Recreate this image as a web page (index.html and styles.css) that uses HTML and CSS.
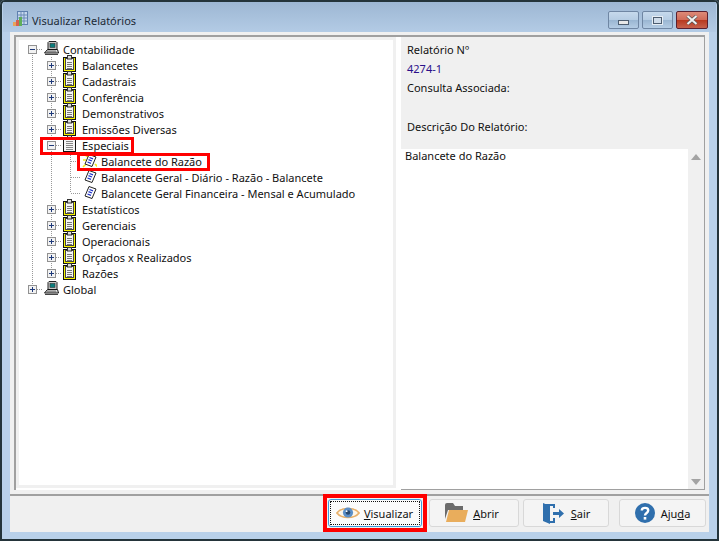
FILE: index.html
```html
<!DOCTYPE html>
<html lang="pt">
<head>
<meta charset="utf-8">
<title>Visualizar Relatórios</title>
<link rel="stylesheet" href="styles.css">
</head>
<body>
<svg class="defs" width="0" height="0">
  <defs>
    <symbol id="pc" viewBox="0 0 15 18">
      <g transform="translate(0,1)">
        <path d="M5 1.500h7l1 1v7H4V2.500z" fill="#c8c8c8" stroke="#222"/>
        <rect x="6" y="3.500" width="5" height="4" fill="#0a7d7d" stroke="#333" stroke-width=".6"/>
        <path d="M3.500 9.500h10l1 3.500H.5z" fill="#e4e4e4" stroke="#111"/>
        <path d="M3 11h9M2.500 12h10" stroke="#555" stroke-width=".7"/>
        <path d="M1 14.500h13" stroke="#444"/>
      </g>
    </symbol>
    <symbol id="clip" viewBox="0 0 15 18">
      <rect x=".5" y="2.500" width="12" height="14" fill="#f8f400" stroke="#111"/>
      <rect x="2.500" y="3.500" width="8" height="11" fill="#f6f6f6" stroke="#444"/>
      <path d="M4 7.500h5M4 9.500h5M4 11.500h5M4 13.500h5" stroke="#777"/>
      <rect x="4.500" y=".5" width="4" height="3.500" fill="#ddd" stroke="#333"/>
    </symbol>
    <symbol id="clipoff" viewBox="0 0 15 18">
      <rect x=".5" y="2.500" width="12" height="14" fill="#f6f6f6" stroke="#111"/>
      <path d="M3 6.500h7M3 8.500h7M3 10.500h7M3 12.500h7M3 14.500h7" stroke="#888"/>
      <rect x="4.500" y=".5" width="4" height="3.500" fill="#ddd" stroke="#333"/>
    </symbol>
    <symbol id="rep" viewBox="0 0 15 18">
      <g transform="translate(1,2)">
        <path d="M6 1.500l7 2.500L9 13.500 2 11z" fill="#fff" stroke="#222"/>
        <path d="M6.500 4.500l3.500 1.300M5.500 6.700l3.500 1.300M4.500 9l3.500 1.300" stroke="#1c30c8" stroke-width="1.300"/>
      </g>
    </symbol>
    <symbol id="repsel" viewBox="0 0 15 18">
      <path d="M2 3l4 3M15 2l-3 3M1 16l3-3M16 16l-3-3M9 2v2M1 9h3" stroke="#f2e820" stroke-width="1.600"/>
      <use href="#rep" width="15" height="18"/>
    </symbol>
  </defs>
</svg>
<div class="window">
  <header class="titlebar">
    <svg class="appicon" width="16" height="16" viewBox="0 0 16 16">
      <rect x="4.500" y=".5" width="10" height="13" fill="#c6d8ee" stroke="#5e7fae"/>
      <path d="M4.500 4h10M4.500 7h10M4.500 10h10M8 .5v13M11 .5v13" stroke="#6a8ab6"/>
      <rect x="0" y="11" width="3" height="4" fill="#e8a35a"/>
      <rect x="3" y="9" width="3" height="6" fill="#d66050"/>
      <rect x="6" y="6" width="3" height="9" fill="#5fae5a"/>
    </svg>
    <span class="title">Visualizar Relatórios</span>
    <div class="caption">
      <span class="capbtn"><i class="glyph-min"></i></span>
      <span class="capbtn"><i class="glyph-max"></i></span>
      <span class="capbtn close">
        <svg width="12" height="10" viewBox="0 0 12 10"><path d="M1.500 1l9 8M10.500 1l-9 8" stroke="#555" stroke-width="3.400"/><path d="M1.500 1l9 8M10.500 1l-9 8" stroke="#f2f2f2" stroke-width="2"/></svg>
      </span>
    </div>
  </header>
  <div class="content">
    <div class="main">
      <div class="tree-wrap">
        <div class="tree">
          <div class="row"><i class="cell exp first"><b class="box minus"></b></i><svg class="ico"><use href="#pc"/></svg><span class="lbl">Contabilidade</span></div>
          <div class="row"><i class="cell vline"></i><i class="cell exp"><b class="box plus"></b></i><svg class="ico"><use href="#clip"/></svg><span class="lbl">Balancetes</span></div>
          <div class="row"><i class="cell vline"></i><i class="cell exp"><b class="box plus"></b></i><svg class="ico"><use href="#clip"/></svg><span class="lbl">Cadastrais</span></div>
          <div class="row"><i class="cell vline"></i><i class="cell exp"><b class="box plus"></b></i><svg class="ico"><use href="#clip"/></svg><span class="lbl">Conferência</span></div>
          <div class="row"><i class="cell vline"></i><i class="cell exp"><b class="box plus"></b></i><svg class="ico"><use href="#clip"/></svg><span class="lbl">Demonstrativos</span></div>
          <div class="row"><i class="cell vline"></i><i class="cell exp"><b class="box plus"></b></i><svg class="ico"><use href="#clip"/></svg><span class="lbl">Emissões Diversas</span></div>
          <div class="row"><i class="cell vline"></i><i class="cell exp"><b class="box minus"></b></i><svg class="ico"><use href="#clipoff"/></svg><span class="lbl">Especiais</span></div>
          <div class="row"><i class="cell vline"></i><i class="cell vline"></i><i class="cell branch"></i><svg class="ico"><use href="#repsel"/></svg><span class="lbl">Balancete do Razão</span></div>
          <div class="row"><i class="cell vline"></i><i class="cell vline"></i><i class="cell branch"></i><svg class="ico"><use href="#rep"/></svg><span class="lbl">Balancete Geral - Diário - Razão - Balancete</span></div>
          <div class="row"><i class="cell vline"></i><i class="cell vline"></i><i class="cell branch last"></i><svg class="ico"><use href="#rep"/></svg><span class="lbl">Balancete Geral Financeira - Mensal e Acumulado</span></div>
          <div class="row"><i class="cell vline"></i><i class="cell exp"><b class="box plus"></b></i><svg class="ico"><use href="#clip"/></svg><span class="lbl">Estatísticos</span></div>
          <div class="row"><i class="cell vline"></i><i class="cell exp"><b class="box plus"></b></i><svg class="ico"><use href="#clip"/></svg><span class="lbl">Gerenciais</span></div>
          <div class="row"><i class="cell vline"></i><i class="cell exp"><b class="box plus"></b></i><svg class="ico"><use href="#clip"/></svg><span class="lbl">Operacionais</span></div>
          <div class="row"><i class="cell vline"></i><i class="cell exp"><b class="box plus"></b></i><svg class="ico"><use href="#clip"/></svg><span class="lbl">Orçados x Realizados</span></div>
          <div class="row"><i class="cell vline"></i><i class="cell exp end"><b class="box plus"></b></i><svg class="ico"><use href="#clip"/></svg><span class="lbl">Razões</span></div>
          <div class="row"><i class="cell exp end"><b class="box plus"></b></i><svg class="ico"><use href="#pc"/></svg><span class="lbl">Global</span></div>
        </div>
      </div>
      <aside class="side">
        <div class="info">
          <div class="info-line">Relatório Nº</div>
          <div class="info-line num">4274-1</div>
          <div class="info-line">Consulta Associada:</div>
          <div class="info-line blank"></div>
          <div class="info-line">Descrição Do Relatório:</div>
        </div>
        <div class="desc">
          <div class="desc-text">Balancete do Razão</div>
          <div class="scroll"><i class="arrow up"></i><i class="arrow down"></i></div>
        </div>
      </aside>
    </div>
    <footer class="footer">
      <button class="btn focus">
        <svg width="24" height="16" viewBox="0 0 26 16"><path d="M1 8C6 1.500 20 1.500 25 8 20 14.500 6 14.500 1 8z" fill="#fdf6ea" stroke="#e8b06a" stroke-width="1.800"/><circle cx="13" cy="7.500" r="5.500" fill="#5b8fc8"/><circle cx="13" cy="7.500" r="2.500" fill="#28486e"/><circle cx="11.500" cy="6" r="1" fill="#fff"/></svg>
        <span><u>V</u>isualizar</span>
      </button>
      <button class="btn abrir">
        <svg width="23" height="20" viewBox="0 0 23 20"><path d="M0 2q0-2 2-2h6l2 3h8v4H3l-3 9z" fill="#6b6b6b"/><path d="M4 7h19l-3 12H1z" fill="#e9ad5c"/></svg>
        <span><u>A</u>brir</span>
      </button>
      <button class="btn sair">
        <svg width="22" height="21" viewBox="0 0 22 21"><path d="M0 1h12v4h-2V3H5v15h5v-3h2v5H6z" fill="#2f6fad"/><path d="M0 0l7 3v18l-7-3z" fill="#2f6fad"/><path d="M10 9h6V6l5 4.500-5 4.500v-3h-6z" fill="#2f6fad"/></svg>
        <span><u>S</u>air</span>
      </button>
      <button class="btn ajuda">
        <svg width="20" height="20" viewBox="0 0 20 20"><circle cx="10" cy="10" r="10" fill="#2f6fad"/><path d="M6.800 7.500C7 4 13.200 4 13.200 7.500c0 2.500-3.200 2.400-3.200 5" fill="none" stroke="#fff" stroke-width="2.400"/><rect x="8.700" y="14" width="2.600" height="2.600" fill="#fff"/></svg>
        <span>Aju<u>d</u>a</span>
      </button>
    </footer>
  </div>
  <i class="mark mark-a"></i>
  <i class="mark mark-b"></i>
  <i class="mark mark-c"></i>
</div>
</body>
</html>
```
FILE: styles.css
```css
* { box-sizing: border-box; }
html, body { margin: 0; padding: 0; background: #2b3a40; }
.defs { position: absolute; }
.window {
  position: relative;
  width: 719px; height: 541px;
  padding: 2px 3px 3px;
  background: #b9d1ea;
  box-shadow: inset 0 0 0 2px #24343a;
  border-radius: 5px 5px 0 0;
  font-family: "Noto Sans", sans-serif;
  font-size: 11px;
  color: #111;
  display: flex; flex-direction: column;
}
.titlebar {
  height: 30px; flex: none;
  display: flex; align-items: center;
  padding: 0 8px 0 10px;
  background: linear-gradient(#9db7d3, #b3cbe5);
}
.appicon { flex: none; margin: 3px 3px 0 0; }
.title { font-size: 11px; margin: 7px 0 0 0; color: #1c2a36; }
.caption { margin-left: auto; display: flex; gap: 3px; align-self: flex-start; margin-top: 9px; }
.capbtn {
  width: 31px; height: 18px;
  display: flex; align-items: center; justify-content: center;
  border: 1px solid #6f86a3; border-radius: 2px;
  background: linear-gradient(#c6d9ec 0, #b5cce3 50%, #9ab6d2 52%, #b4cce4 100%);
}
.capbtn.close { width: 32px; border-color: #5a2030; background: linear-gradient(#dd8a78 0, #cf6a58 50%, #b8391f 52%, #c6614c 100%); }
.glyph-min { width: 11px; height: 5px; background: #e8e8e8; border: 1px solid #4d5d70; margin-top: 5px; }
.glyph-max { width: 11px; height: 9px; border: 2px solid #4d5d70; background: #cfdcea; outline: 1px solid #e6edf4; outline-offset: -1px; }
.content {
  flex: 1; min-height: 0;
  margin: 0 7px 6px;
  background: #f0f0f0;
  display: flex; flex-direction: column;
  padding: 3px 0 0 4px;
}
.main {
  height: 455px; flex: none;
  margin-right: 4px;
  display: flex;
  border-top: 2px solid #a0a0a0;
  border-left: 2px solid #a0a0a0;
  border-right: 1px solid #a0a0a0;
  background: #fff;
}
.tree-wrap {
  width: 380px; flex: none;
  background: #fff;
  border: 3px solid #f0f0f0;
  height: 451px;
}
.tree { padding: 1px 0 0 4px; }
.row { height: 16px; display: flex; align-items: center; white-space: nowrap; }
.cell { display: block; flex: none; width: 19px; height: 16px; position: relative; }
.vline { background: repeating-linear-gradient(#999 0 1px, transparent 1px 2px) 9px 0 / 1px 100% no-repeat; }
.exp {
  background:
    repeating-linear-gradient(#999 0 1px, transparent 1px 2px) 9px 0 / 1px 100% no-repeat,
    repeating-linear-gradient(90deg, #999 0 1px, transparent 1px 2px) 10px 8px / 9px 1px no-repeat;
  display: flex; align-items: center; justify-content: center;
}
.exp.first {
  background:
    repeating-linear-gradient(#999 0 1px, transparent 1px 2px) 9px 8px / 1px 8px no-repeat,
    repeating-linear-gradient(90deg, #999 0 1px, transparent 1px 2px) 10px 8px / 9px 1px no-repeat;
}
.exp.end {
  background:
    repeating-linear-gradient(#999 0 1px, transparent 1px 2px) 9px 0 / 1px 8px no-repeat,
    repeating-linear-gradient(90deg, #999 0 1px, transparent 1px 2px) 10px 8px / 9px 1px no-repeat;
}
.branch {
  background:
    repeating-linear-gradient(#999 0 1px, transparent 1px 2px) 9px 0 / 1px 100% no-repeat,
    repeating-linear-gradient(90deg, #999 0 1px, transparent 1px 2px) 10px 8px / 9px 1px no-repeat;
}
.branch.last {
  background:
    repeating-linear-gradient(#999 0 1px, transparent 1px 2px) 9px 0 / 1px 8px no-repeat,
    repeating-linear-gradient(90deg, #999 0 1px, transparent 1px 2px) 10px 8px / 9px 1px no-repeat;
}
.box {
  display: block; width: 9px; height: 9px;
  border: 1px solid #919191;
  background-color: #f2f2f2;
  background-repeat: no-repeat;
}
.minus { background-image: linear-gradient(#1f3a7a, #1f3a7a); background-size: 5px 1px; background-position: 1px 3px; }
.plus {
  background-image: linear-gradient(#1f3a7a, #1f3a7a), linear-gradient(#1f3a7a, #1f3a7a);
  background-size: 5px 1px, 1px 5px;
  background-position: 1px 3px, 3px 1px;
}
.ico { width: 15px; height: 18px; flex: none; margin: -2px 0 0 2px; align-self: flex-start; }
.lbl { margin-left: 4px; }
.side {
  flex: 1; min-width: 0;
  margin-left: 5px;
  display: flex; flex-direction: column;
  border-bottom: 1px solid #a0a0a0;
}
.info { height: 112px; flex: none; background: #f0f0f0; padding: 3px 0 0 6px; }
.info-line { height: 19px; line-height: 19px; }
.blank { height: 20px; }
.num { color: #2a0f8a; }
.desc { flex: 1; min-height: 0; display: flex; background: #fff; }
.desc-text { flex: 1; padding: 0 0 0 4px; line-height: 13px; }
.scroll {
  width: 16px; flex: none; background: #f0f0f0;
  display: flex; flex-direction: column; justify-content: space-between; align-items: center;
  padding: 5px 0 4px;
}
.arrow { display: block; width: 0; height: 0; border-left: 5px solid transparent; border-right: 5px solid transparent; }
.arrow.up { border-bottom: 6px solid #a3a3a3; }
.arrow.down { border-top: 6px solid #a3a3a3; }
.footer {
  flex: 1; min-height: 0;
  margin: 4px 0 0 -4px;
  border-top: 2px solid #a0a0a0;
  display: flex; justify-content: flex-end; align-items: flex-start; gap: 4px;
  padding: 3px 3px 0 0;
}
.btn {
  height: 28px; padding: 0;
  border: 1px solid #d8d8d8; border-radius: 3px;
  background: #f4f4f4;
  display: flex; align-items: center; justify-content: center; gap: 5px;
  font: inherit; color: #111;
}
.btn.focus { width: 94px; gap: 4px; padding-right: 1px; border-color: #3c9bdc; outline: 1px dotted #111; outline-offset: -3px; background: #fbfbfb; margin-right: 3px; }
.abrir { width: 90px; padding-right: 4px; }
.sair { width: 86px; padding-left: 1px; gap: 6px; }
.ajuda { width: 87px; margin-left: 6px; gap: 6px; }
.mark { position: absolute; display: block; border: 4px solid #f00; }
.mark-a { left: 40px; top: 137px; width: 94px; height: 18px; border-width: 3px; }
.mark-b { left: 77px; top: 153px; width: 133px; height: 18px; border-width: 3px; }
.mark-c { left: 323px; top: 494px; width: 104px; height: 38px; }
```
